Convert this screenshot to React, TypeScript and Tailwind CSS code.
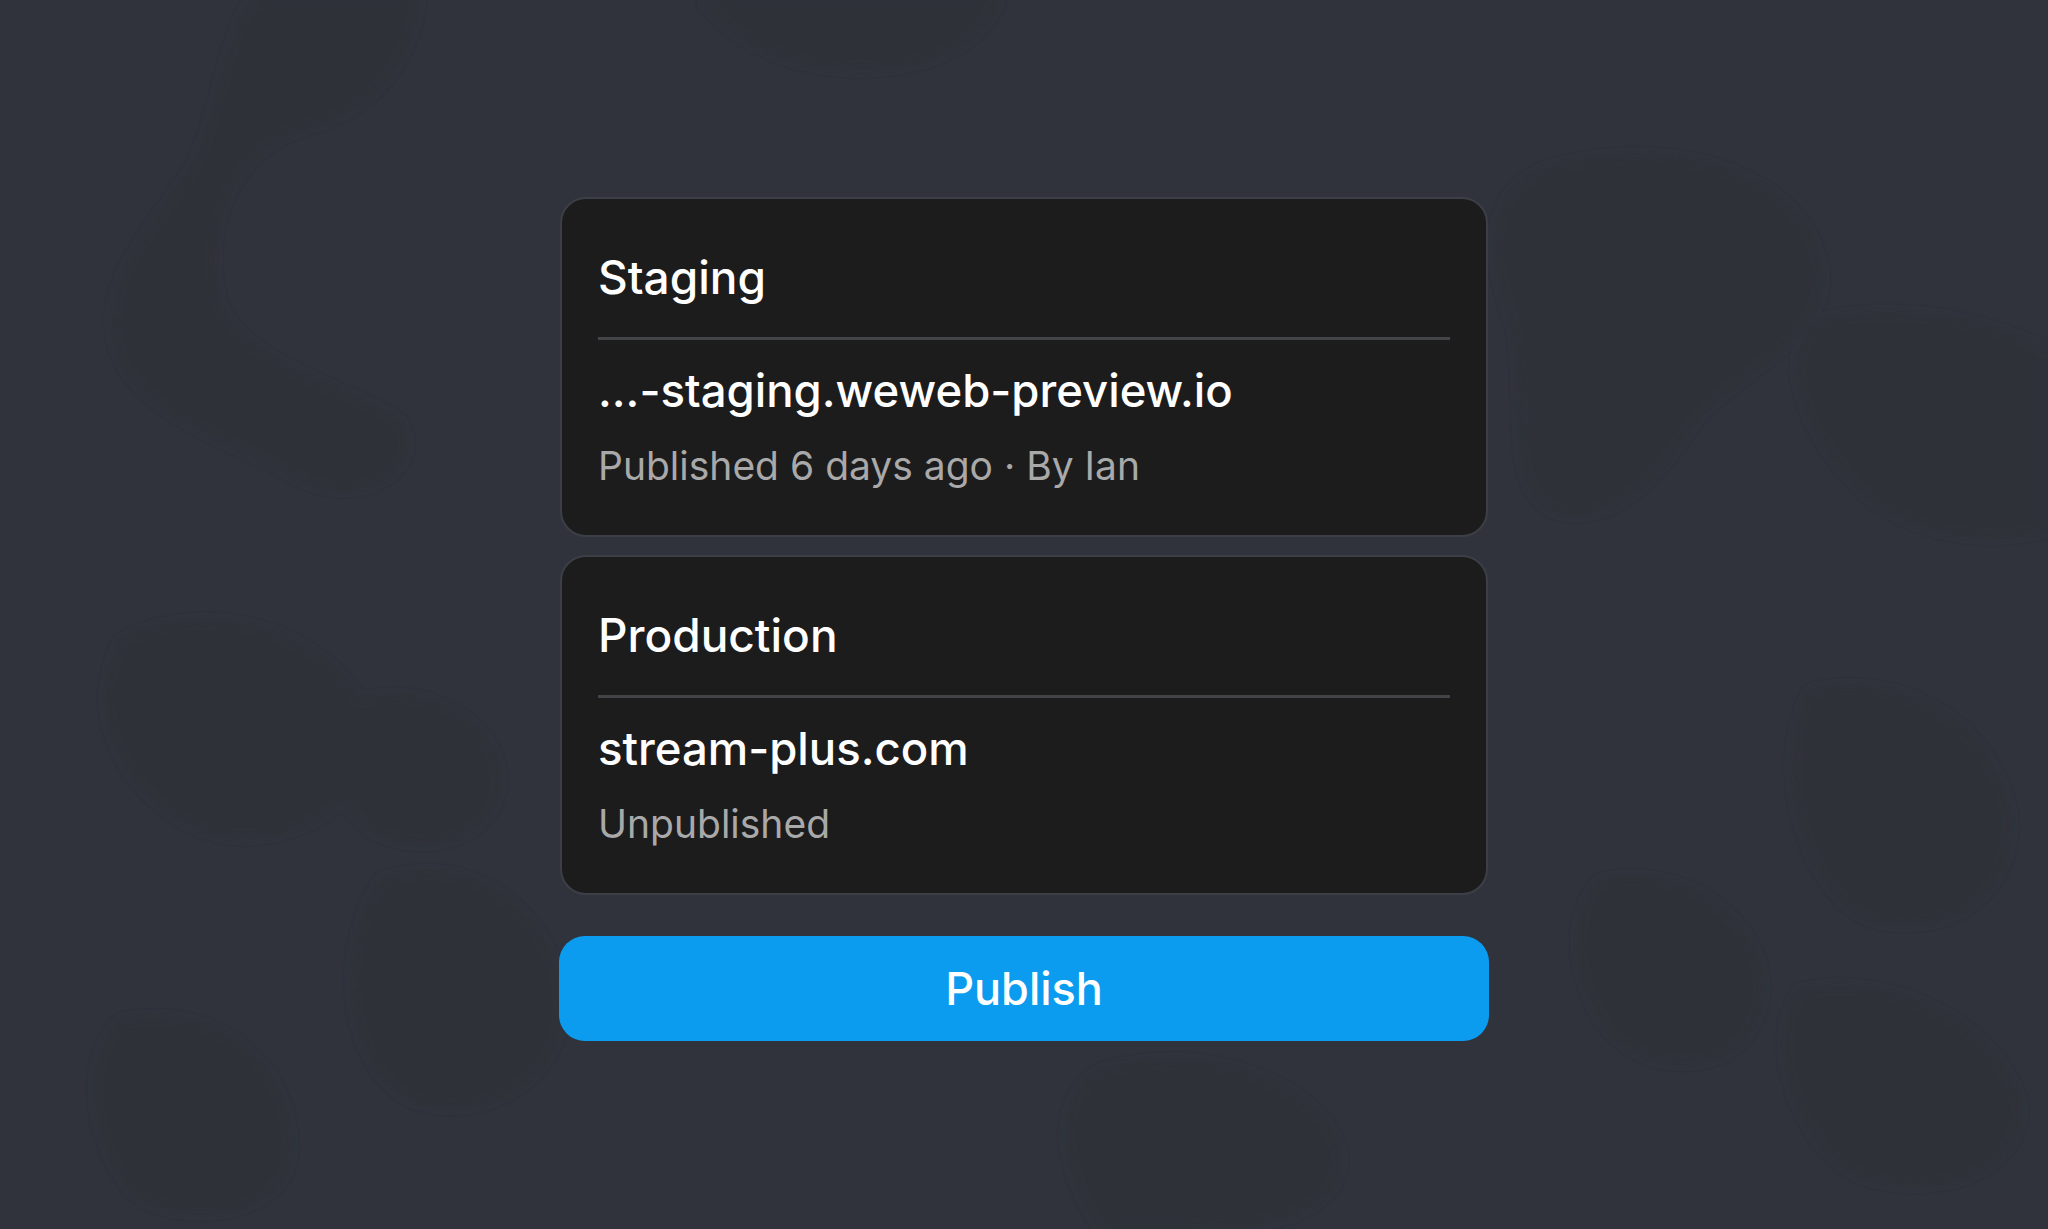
import React from 'react';

interface Environment {
  name: string;
  domain: string;
  status: string;
}

const environments: Environment[] = [
  { name: 'Staging', domain: '...-staging.weweb-preview.io', status: 'Published 6 days ago · By Ian' },
  { name: 'Production', domain: 'stream-plus.com', status: 'Unpublished' },
];

function Backdrop() {
  // low-contrast camo shapes behind the panel
  return (
    <svg className="absolute inset-0 h-full w-full" viewBox="0 0 2048 1229" preserveAspectRatio="none">
      <defs>
        <filter id="soft" x="-10%" y="-10%" width="120%" height="120%">
          <feGaussianBlur stdDeviation="5" />
        </filter>
      </defs>
      <g filter="url(#soft)" fill="#2d3038">
        <path d="M250 0 L420 0 C410 60 380 110 300 130 C240 150 200 220 220 300 C240 360 330 380 400 420 C430 470 360 510 300 480 C230 440 150 420 120 360 C90 290 150 230 190 170 C220 110 220 50 250 0 Z" />
        <path d="M120 640 C220 590 340 640 370 720 C390 800 280 860 200 830 C130 800 80 720 120 640 Z" />
        <path d="M380 880 C460 850 540 900 560 980 C580 1070 490 1130 410 1100 C350 1070 330 960 380 880 Z" />
        <path d="M120 1020 C220 1000 300 1070 290 1160 C280 1220 170 1229 130 1190 C90 1140 80 1060 120 1020 Z" />
        <path d="M1540 170 C1660 130 1800 170 1820 260 C1840 340 1730 370 1690 430 C1650 490 1600 530 1550 510 C1500 480 1530 380 1510 320 C1490 260 1480 200 1540 170 Z" />
        <path d="M1820 320 C1900 300 1990 320 2048 350 L2048 530 C1980 550 1900 530 1860 490 C1810 440 1770 360 1820 320 Z" />
        <path d="M1810 690 C1900 670 1990 720 2010 810 C2020 900 1940 940 1870 920 C1800 890 1770 760 1810 690 Z" />
        <path d="M1800 990 C1900 970 2000 1030 2020 1100 C2030 1170 1940 1200 1870 1180 C1800 1160 1760 1040 1800 990 Z" />
        <path d="M1600 880 C1690 860 1780 930 1760 1010 C1740 1080 1640 1080 1600 1020 C1570 970 1570 910 1600 880 Z" />
        <path d="M700 0 L1000 0 C980 50 920 70 860 70 C800 70 740 50 700 0 Z" />
        <path d="M1100 1070 C1200 1040 1320 1080 1340 1150 C1350 1210 1270 1229 1200 1229 L1100 1229 C1060 1170 1050 1100 1100 1070 Z" />
        <path d="M360 700 C420 680 500 720 500 780 C500 840 420 860 370 830 C330 800 320 730 360 700 Z" />
      </g>
    </svg>
  );
}

function EnvironmentCard({ env }: { env: Environment }) {
  return (
    <div className="mx-px rounded-[26px] border-2 border-[#3c3f46] bg-[#1c1c1d] px-[36px] pt-[50px] pb-[45px]">
      <h2 className="text-[46px] leading-[56px] font-medium text-white">{env.name}</h2>
      <div className="mt-[32px] h-[3px] bg-[#434447]" />
      <p className="mt-[23px] text-[45.5px] leading-[56px] font-medium text-white">{env.domain}</p>
      <p className="mt-[23px] text-[39px] leading-[48px] text-[#a9a9a9]">{env.status}</p>
    </div>
  );
}

export default function App() {
  return (
    <div
      className="relative h-[1229px] w-[2048px] overflow-hidden bg-[#30333c]"
      style={{ fontFamily: 'Inter, "Noto Sans", sans-serif' }}
    >
      <Backdrop />
      <div className="relative mx-auto flex w-[930px] flex-col pt-[197px]">
        <div className="flex flex-col gap-[18px]">
          {environments.map(env => (
            <EnvironmentCard key={env.name} env={env} />
          ))}
        </div>
        <button className="mt-[41px] h-[105px] rounded-[26px] bg-[#0b9cf0] text-[45px] font-medium text-white">
          Publish
        </button>
      </div>
    </div>
  );
}
